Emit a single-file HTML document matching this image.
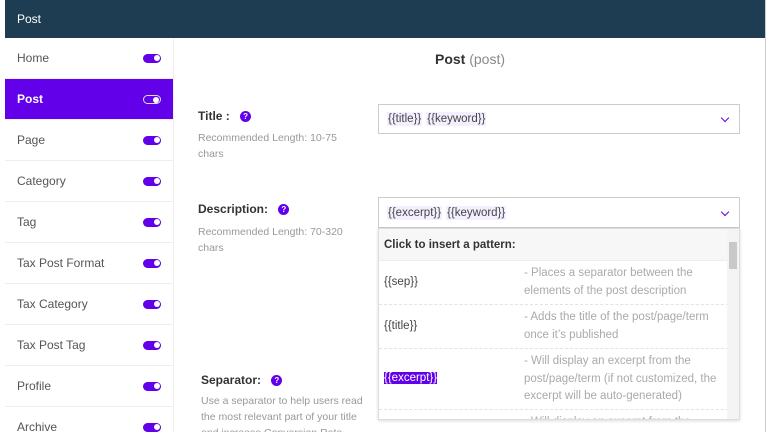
<!DOCTYPE html>
<html><head><meta charset="utf-8"><style>
*{box-sizing:border-box;margin:0;padding:0}
html,body{width:768px;height:432px;overflow:hidden}
body{background:#fff;font-family:"Liberation Sans","DejaVu Sans",sans-serif;color:#444;position:relative}
.hdr{position:absolute;left:5px;top:0;width:760px;height:38px;background:#1f3d52;color:#fff;font-size:12px;padding:12px 12px}
.edge{position:absolute;left:765px;top:0;width:1px;height:432px;background:#ccc}
.side{position:absolute;left:5px;top:38px;width:169px;height:394px;background:#fff;border-right:1px solid #eee;overflow:hidden}
.it{height:41px;border-bottom:1px solid #eee;font-size:12px;color:#555;padding:0 12px;display:flex;align-items:center;justify-content:space-between}
.it.act{background:#6200ea;color:#fff;font-weight:bold}
.tg{width:18px;height:9px;border-radius:5px;background:#6200ea;position:relative}
.tg:after{content:"";position:absolute;right:1.5px;top:1.5px;width:6px;height:6px;border-radius:50%;background:#fff}
.act .tg{background:transparent;border:1px solid #ddd}
.act .tg:after{top:1px;right:1px}
.h{position:absolute;font-size:12px;color:#333;font-weight:bold}
.q{display:inline-block;width:11px;height:11px;border-radius:50%;background:#6200ea;color:#fff;font-size:8px;text-align:center;line-height:11px;vertical-align:1px;margin-left:7px}
.sub{position:absolute;font-size:10.5px;color:#999;line-height:16px}
.box{position:absolute;left:378px;width:362px;border:1px solid #ccc;background:#fff;font-size:11.5px;color:#444;padding:0 8px;display:flex;align-items:center}
.tk{background:#f3efff;padding:1px 1px;margin-right:4px}
.chev{position:absolute;right:11px;top:50%;margin-top:-4px;width:6px;height:6px;border-right:1.5px solid #6200ea;border-bottom:1.5px solid #6200ea;transform:rotate(45deg)}
.dd{position:absolute;left:378px;top:228px;width:362px;height:192px;border:1px solid #ddd;background:#fff;overflow:hidden;box-shadow:0 1px 3px rgba(0,0,0,.15)}
.dh{height:32px;background:#f7f7f7;border-bottom:1px solid #eee;font-size:11.5px;font-weight:bold;color:#333;padding:10px 5px}
.row{display:flex;border-bottom:1px dashed #e3e3e3;font-size:11.5px;line-height:17.5px;padding:4px 5px}
.row .k{width:140px;color:#444;align-self:center}
.row .d{color:#aaa;width:200px}
.sb{position:absolute;right:0;top:0;width:12px;height:100%;background:#f4f4f4}
.sb i{position:absolute;left:2px;top:13px;width:8px;height:27px;background:#c8c8c8}
</style></head><body>
<div class="hdr">Post</div>
<div class="edge"></div>
<div class="side">
<div class="it">Home<span class="tg"></span></div>
<div class="it act">Post<span class="tg"></span></div>
<div class="it">Page<span class="tg"></span></div>
<div class="it">Category<span class="tg"></span></div>
<div class="it">Tag<span class="tg"></span></div>
<div class="it">Tax Post Format<span class="tg"></span></div>
<div class="it">Tax Category<span class="tg"></span></div>
<div class="it">Tax Post Tag<span class="tg"></span></div>
<div class="it">Profile<span class="tg"></span></div>
<div class="it">Archive<span class="tg"></span></div>
</div>
<div style="position:absolute;left:435px;top:51px;font-size:14px;font-weight:bold;color:#333">Post <span style="font-weight:normal;color:#888">(post)</span></div>
<div class="h" style="left:198px;top:109px">Title : <span class="q">?</span></div>
<div class="sub" style="left:198px;top:130px">Recommended Length: 10-75<br>chars</div>
<div class="box" style="top:104px;height:30px"><span class="tk">{{title}}</span> <span class="tk">{{keyword}}</span><span class="chev"></span></div>
<div class="h" style="left:198px;top:202px">Description: <span class="q">?</span></div>
<div class="sub" style="left:198px;top:224px">Recommended Length: 70-320<br>chars</div>
<div class="box" style="top:197px;height:31px"><span class="tk">{{excerpt}}</span><span class="tk">{{keyword}}</span><span class="chev"></span></div>
<div class="dd">
<div class="dh">Click to insert a pattern:</div>
<div class="row" style="height:44px"><span class="k">{{sep}}</span><span class="d">- Places a separator between the elements of the post description</span></div>
<div class="row" style="height:44px"><span class="k">{{title}}</span><span class="d">- Adds the title of the post/page/term once it’s published</span></div>
<div class="row" style="height:61px"><span class="k"><span style="background:#6200ea;color:#fff">{{excerpt}}</span></span><span class="d">- Will display an excerpt from the post/page/term (if not customized, the excerpt will be auto-generated)</span></div>
<div class="row"><span class="k"></span><span class="d">- Will display an excerpt from the</span></div>
<div class="sb"><i></i></div>
</div>
<div class="h" style="left:201px;top:373px">Separator: <span class="q">?</span></div>
<div class="sub" style="left:201px;top:393px;width:170px">Use a separator to help users read the most relevant part of your title and increase Conversion Rate</div>
</body></html>
